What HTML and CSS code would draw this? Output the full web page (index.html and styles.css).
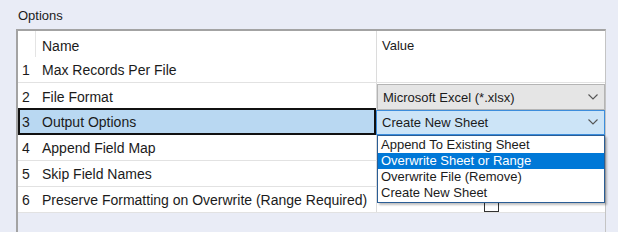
FILE: index.html
```html
<!DOCTYPE html>
<html lang="en">
<head>
    <meta charset="UTF-8">
    <title>Options</title>
    <link rel="stylesheet" href="styles.css">
</head>
<body>
    <div class="panel">
        <div class="caption">Options</div>
        <div class="grid">
            <div class="row head">
                <span class="num"></span>
                <span class="name">Name</span>
                <span class="value">Value</span>
            </div>
            <div class="row first">
                <span class="num">1</span>
                <span class="name">Max Records Per File</span>
                <span class="value"></span>
            </div>
            <div class="row">
                <span class="num">2</span>
                <span class="name">File Format</span>
                <span class="value"><span class="combo">Microsoft Excel (*.xlsx)<svg class="chev" width="10" height="6" viewBox="0 0 10 6"><path d="M0.5 0.5 L5 5 L9.5 0.5" fill="none" stroke="#555" stroke-width="1.1"/></svg></span></span>
            </div>
            <div class="row selected">
                <span class="sel-box"><span class="num">3</span><span class="name">Output Options</span></span>
                <span class="value"><span class="combo open">Create New Sheet<svg class="chev" width="10" height="6" viewBox="0 0 10 6"><path d="M0.5 0.5 L5 5 L9.5 0.5" fill="none" stroke="#555" stroke-width="1.1"/></svg></span></span>
            </div>
            <div class="row">
                <span class="num">4</span>
                <span class="name">Append Field Map</span>
                <span class="value"></span>
            </div>
            <div class="row">
                <span class="num">5</span>
                <span class="name">Skip Field Names</span>
                <span class="value"></span>
            </div>
            <div class="row">
                <span class="num">6</span>
                <span class="name">Preserve Formatting on Overwrite (Range Required)</span>
                <span class="value"><span class="check"></span></span>
            </div>
        </div>

        <!-- open list of the Output Options combo -->
        <ul class="dropdown">
            <li>Append To Existing Sheet</li>
            <li class="hot">Overwrite Sheet or Range</li>
            <li>Overwrite File (Remove)</li>
            <li>Create New Sheet</li>
        </ul>
    </div>
</body>
</html>
```

FILE: styles.css
```css
body {
    margin: 0;
    background: #e9ecf6;
    font-family: "Liberation Sans", Arial, sans-serif;
    font-size: 14px;
    color: #1b1b1b;
    overflow: hidden;
}
.panel {
    position: relative;
    padding: 8px 0 0 16px;
    height: 224px;
}
.caption {
    padding-left: 2px;
    height: 21px;
    line-height: 16px;
    font-size: 13px;
}
.grid {
    width: 587px;
    height: 201px;
    border-top: 2px solid #a3a3a3;
    border-left: 2px solid #a3a3a3;
    border-right: 1px solid #c4c4c4;
}
.row {
    display: grid;
    grid-template-columns: 18px 340px 1fr;
    height: 25px;
    background: #fff;
    border-bottom: 1px solid #e2e2e2;
}
.row > span,
.sel-box > span {
    display: flex;
    align-items: center;
    white-space: nowrap;
}
.num {
    padding-left: 4px;
}
.name {
    padding-left: 6px;
}
.value {
    border-left: 1px solid #dcdcdc;
    font-size: 13px;
}
.head {
    height: 26px;
    border-bottom: none;
}
.head > span {
    align-items: flex-start;
    padding-top: 7px;
}
.head .num {
    border-right: 1px solid #e4e4e4;
}
.head .value {
    padding-left: 5px;
}
.first .value {
    margin-top: -1px;
}
.combo {
    display: flex;
    align-items: center;
    justify-content: space-between;
    box-sizing: border-box;
    width: 100%;
    height: 26px;
    margin-top: 1px;
    padding: 0 5px 0 5px;
    background: #e5e5e5;
    border: 1px solid #b4b4b4;
}
.chev {
    margin-right: 1px;
}
.selected {
    height: 26px;
    border-bottom: none;
    background: transparent;
}
.row > .sel-box {
    grid-column: 1 / 3;
    display: grid;
    grid-template-columns: 16px 338px;
    align-items: stretch;
    background: #b9d8f2;
    border: 2px solid #111;
    margin-top: -1px;
}
.selected .value {
    border-left: none;
}
.selected .combo {
    margin-top: 0;
    height: 25px;
    background: #cce4f7;
    border: 1px solid #3c8ddc;
}
.selected .num {
    padding-left: 2px;
}
.check {
    display: block;
    width: 13px;
    height: 13px;
    margin: 9px 0 0 107px;
    background: #fff;
    border: 1px solid #333;
}
.dropdown {
    position: absolute;
    left: 377px;
    top: 135px;
    width: 226px;
    margin: 0;
    padding: 1px 0;
    list-style: none;
    background: #fff;
    border: 1px solid #2a5d95;
    box-shadow: 2px 2px 2px rgba(0, 0, 0, 0.25);
    font-size: 13px;
}
.dropdown li {
    height: 16px;
    line-height: 16px;
    padding-left: 3px;
}
.dropdown .hot {
    background: #0078d7;
    color: #fff;
}
```
